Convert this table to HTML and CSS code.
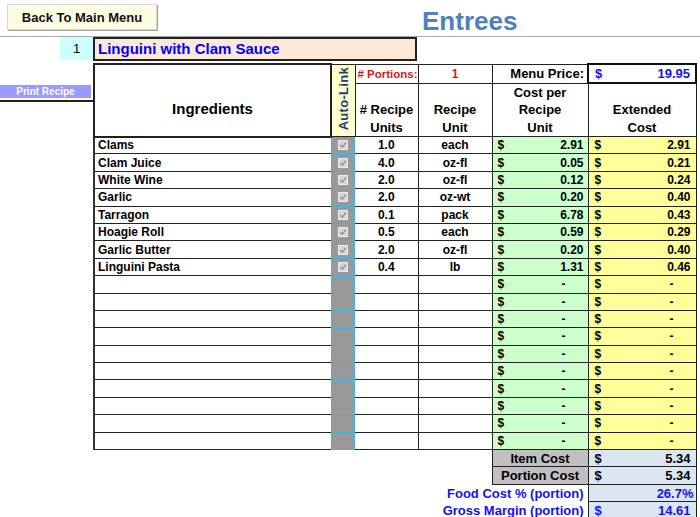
FILE: index.html
```html
<!DOCTYPE html>
<html>
<head>
<meta charset="utf-8">
<link rel="stylesheet" href="styles.css">
</head>
<body>
<div class="page">
  <header class="topbar">
    <button class="back-btn">Back To Main Menu</button>
    <h1 class="title">Entrees</h1>
  </header>
  <div class="name-row">
    <div class="recipe-no">1</div>
    <div class="recipe-name">Linguini with Clam Sauce</div>
  </div>
  <div class="sheet">
    <aside class="gutter">
      <div class="print-btn">Print Recipe</div>
      <div class="print-rule"></div>
    </aside>
    <table class="grid">
      <colgroup>
        <col class="c-ing"><col class="c-auto"><col class="c-units"><col class="c-unit"><col class="c-cost"><col class="c-ext">
      </colgroup>
      <tr class="h1">
        <th class="ing-h" rowspan="2">Ingredients</th>
        <th class="auto-h" rowspan="2"><span class="vtext">Auto-Link</span></th>
        <td class="portions-l">#&nbsp;Portions:</td>
        <td class="portions-v">1</td>
        <td class="menu-l">Menu Price:</td>
        <td class="menu-v"><span class="d">$</span>19.95</td>
      </tr>
      <tr class="h2">
        <th class="hd">#&nbsp;Recipe<br>Units</th>
        <th class="hd">Recipe<br>Unit</th>
        <th class="hd cost-h">Cost per<br>Recipe<br>Unit</th>
        <th class="hd">Extended<br>Cost</th>
      </tr>
      <tr class="r"><td class="ing">Clams</td><td class="auto"><svg class="chk" width="10" height="10" viewBox="0 0 10 10"><rect x="0.5" y="0.5" width="9" height="9" fill="#d6d6d6" stroke="#ececec"/><path d="M2.2 5.2l2 2 3.8-4.6" fill="none" stroke="#8a8a8a" stroke-width="1.2"/></svg></td><td class="units">1.0</td><td class="unit">each</td><td class="cost"><span class="d">$</span>2.91</td><td class="ext"><span class="d">$</span>2.91</td></tr>
      <tr class="r"><td class="ing">Clam Juice</td><td class="auto"><svg class="chk" width="10" height="10" viewBox="0 0 10 10"><rect x="0.5" y="0.5" width="9" height="9" fill="#d6d6d6" stroke="#ececec"/><path d="M2.2 5.2l2 2 3.8-4.6" fill="none" stroke="#8a8a8a" stroke-width="1.2"/></svg></td><td class="units">4.0</td><td class="unit">oz-fl</td><td class="cost"><span class="d">$</span>0.05</td><td class="ext"><span class="d">$</span>0.21</td></tr>
      <tr class="r"><td class="ing">White Wine</td><td class="auto"><svg class="chk" width="10" height="10" viewBox="0 0 10 10"><rect x="0.5" y="0.5" width="9" height="9" fill="#d6d6d6" stroke="#ececec"/><path d="M2.2 5.2l2 2 3.8-4.6" fill="none" stroke="#8a8a8a" stroke-width="1.2"/></svg></td><td class="units">2.0</td><td class="unit">oz-fl</td><td class="cost"><span class="d">$</span>0.12</td><td class="ext"><span class="d">$</span>0.24</td></tr>
      <tr class="r"><td class="ing">Garlic</td><td class="auto"><svg class="chk" width="10" height="10" viewBox="0 0 10 10"><rect x="0.5" y="0.5" width="9" height="9" fill="#d6d6d6" stroke="#ececec"/><path d="M2.2 5.2l2 2 3.8-4.6" fill="none" stroke="#8a8a8a" stroke-width="1.2"/></svg></td><td class="units">2.0</td><td class="unit">oz-wt</td><td class="cost"><span class="d">$</span>0.20</td><td class="ext"><span class="d">$</span>0.40</td></tr>
      <tr class="r"><td class="ing">Tarragon</td><td class="auto"><svg class="chk" width="10" height="10" viewBox="0 0 10 10"><rect x="0.5" y="0.5" width="9" height="9" fill="#d6d6d6" stroke="#ececec"/><path d="M2.2 5.2l2 2 3.8-4.6" fill="none" stroke="#8a8a8a" stroke-width="1.2"/></svg></td><td class="units">0.1</td><td class="unit">pack</td><td class="cost"><span class="d">$</span>6.78</td><td class="ext"><span class="d">$</span>0.43</td></tr>
      <tr class="r"><td class="ing">Hoagie Roll</td><td class="auto"><svg class="chk" width="10" height="10" viewBox="0 0 10 10"><rect x="0.5" y="0.5" width="9" height="9" fill="#d6d6d6" stroke="#ececec"/><path d="M2.2 5.2l2 2 3.8-4.6" fill="none" stroke="#8a8a8a" stroke-width="1.2"/></svg></td><td class="units">0.5</td><td class="unit">each</td><td class="cost"><span class="d">$</span>0.59</td><td class="ext"><span class="d">$</span>0.29</td></tr>
      <tr class="r"><td class="ing">Garlic Butter</td><td class="auto"><svg class="chk" width="10" height="10" viewBox="0 0 10 10"><rect x="0.5" y="0.5" width="9" height="9" fill="#d6d6d6" stroke="#ececec"/><path d="M2.2 5.2l2 2 3.8-4.6" fill="none" stroke="#8a8a8a" stroke-width="1.2"/></svg></td><td class="units">2.0</td><td class="unit">oz-fl</td><td class="cost"><span class="d">$</span>0.20</td><td class="ext"><span class="d">$</span>0.40</td></tr>
      <tr class="r"><td class="ing">Linguini Pasta</td><td class="auto"><svg class="chk" width="10" height="10" viewBox="0 0 10 10"><rect x="0.5" y="0.5" width="9" height="9" fill="#d6d6d6" stroke="#ececec"/><path d="M2.2 5.2l2 2 3.8-4.6" fill="none" stroke="#8a8a8a" stroke-width="1.2"/></svg></td><td class="units">0.4</td><td class="unit">lb</td><td class="cost"><span class="d">$</span>1.31</td><td class="ext"><span class="d">$</span>0.46</td></tr>
      <tr class="r"><td class="ing"></td><td class="auto"></td><td class="units"></td><td class="unit"></td><td class="cost"><span class="d">$</span><span class="dash">-</span></td><td class="ext"><span class="d">$</span><span class="dash">-</span></td></tr>
      <tr class="r"><td class="ing"></td><td class="auto"></td><td class="units"></td><td class="unit"></td><td class="cost"><span class="d">$</span><span class="dash">-</span></td><td class="ext"><span class="d">$</span><span class="dash">-</span></td></tr>
      <tr class="r"><td class="ing"></td><td class="auto"></td><td class="units"></td><td class="unit"></td><td class="cost"><span class="d">$</span><span class="dash">-</span></td><td class="ext"><span class="d">$</span><span class="dash">-</span></td></tr>
      <tr class="r"><td class="ing"></td><td class="auto"></td><td class="units"></td><td class="unit"></td><td class="cost"><span class="d">$</span><span class="dash">-</span></td><td class="ext"><span class="d">$</span><span class="dash">-</span></td></tr>
      <tr class="r"><td class="ing"></td><td class="auto"></td><td class="units"></td><td class="unit"></td><td class="cost"><span class="d">$</span><span class="dash">-</span></td><td class="ext"><span class="d">$</span><span class="dash">-</span></td></tr>
      <tr class="r"><td class="ing"></td><td class="auto"></td><td class="units"></td><td class="unit"></td><td class="cost"><span class="d">$</span><span class="dash">-</span></td><td class="ext"><span class="d">$</span><span class="dash">-</span></td></tr>
      <tr class="r"><td class="ing"></td><td class="auto"></td><td class="units"></td><td class="unit"></td><td class="cost"><span class="d">$</span><span class="dash">-</span></td><td class="ext"><span class="d">$</span><span class="dash">-</span></td></tr>
      <tr class="r"><td class="ing"></td><td class="auto"></td><td class="units"></td><td class="unit"></td><td class="cost"><span class="d">$</span><span class="dash">-</span></td><td class="ext"><span class="d">$</span><span class="dash">-</span></td></tr>
      <tr class="r"><td class="ing"></td><td class="auto"></td><td class="units"></td><td class="unit"></td><td class="cost"><span class="d">$</span><span class="dash">-</span></td><td class="ext"><span class="d">$</span><span class="dash">-</span></td></tr>
      <tr class="r last"><td class="ing"></td><td class="auto"></td><td class="units"></td><td class="unit"></td><td class="cost"><span class="d">$</span><span class="dash">-</span></td><td class="ext"><span class="d">$</span><span class="dash">-</span></td></tr>
      <tr class="s"><td class="blank" colspan="4"></td><td class="sum-l">Item Cost</td><td class="sum-v"><span class="d">$</span>5.34</td></tr>
      <tr class="s"><td class="blank" colspan="4"></td><td class="sum-l">Portion Cost</td><td class="sum-v"><span class="d">$</span>5.34</td></tr>
      <tr class="s"><td class="blank fc-l" colspan="5">Food Cost % (portion)</td><td class="sum-v blue pct">26.7%</td></tr>
      <tr class="s"><td class="blank fc-l" colspan="5">Gross Margin (portion)</td><td class="sum-v blue"><span class="d">$</span>14.61</td></tr>
    </table>
  </div>
</div>
</body>
</html>
```
FILE: styles.css
```css
* { box-sizing: border-box; }
body {
  margin: 0;
  font-family: "Liberation Sans", Arial, sans-serif;
  background: #fff;
  color: #000;
}
.page {
  width: 700px;
  height: 517px;
  overflow: hidden;
}
.topbar {
  display: flex;
  align-items: flex-start;
  height: 37px;
  border-bottom: 1px solid #a8a8a8;
}
.back-btn {
  margin: 4px 0 0 7px;
  width: 150px;
  height: 26px;
  padding: 0;
  background: #fdfde4;
  border: 1px solid #d6d6d6;
  box-shadow: 1px 1px 0 #a0a0a0;
  font: bold 13px "Liberation Sans", Arial, sans-serif;
  color: #111;
}
.title {
  margin: 6px 0 0 265px;
  font-size: 26px;
  line-height: 30px;
  font-weight: bold;
  color: #4f81bd;
}
.name-row {
  display: flex;
  height: 24px;
}
.recipe-no {
  margin-left: 60px;
  width: 33px;
  height: 23px;
  background: #ccffff;
  font-size: 13px;
  display: flex;
  align-items: center;
  justify-content: center;
}
.recipe-name {
  width: 324px;
  height: 24px;
  border: 2px solid #222;
  background: #fde9d9;
  color: #0000ff;
  font-weight: bold;
  font-size: 15px;
  line-height: 20px;
  padding-left: 3px;
}
.sheet {
  display: flex;
  margin-top: 2px;
}
.gutter {
  width: 93px;
  flex: none;
}
.print-btn {
  margin-top: 22px;
  width: 91px;
  height: 13px;
  background: #9999ff;
  color: #fff;
  font-size: 10px;
  font-weight: bold;
  line-height: 13px;
  text-align: center;
}
.print-rule {
  margin-top: 2px;
  width: 93px;
  height: 2px;
  background: #222;
}
.grid {
  border-collapse: collapse;
  table-layout: fixed;
  width: 602px;
  font-size: 12px;
  font-weight: bold;
}
.c-ing { width: 237px; }
.c-auto { width: 24px; }
.c-units { width: 63px; }
.c-unit { width: 74px; }
.c-cost { width: 96px; }
.c-ext { width: 108px; }
.grid td, .grid th {
  padding: 0;
  border: 1px solid #222;
  white-space: nowrap;
  overflow: hidden;
}
.h1 { height: 19px; }
.h2 { height: 53px; }
.ing-h {
  font-size: 15px;
  border: 2px solid #222 !important;
  vertical-align: middle;
  padding-top: 17px !important;
}
.auto-h {
  background: #ffffcc;
  vertical-align: middle;
  text-align: center;
}
.vtext {
  display: inline-block;
  writing-mode: vertical-rl;
  transform: rotate(180deg);
  font-size: 13px;
  color: #1f3f73;
  letter-spacing: 0.3px;
}
.portions-l {
  color: #e3161b;
  font-size: 11.5px;
  text-align: left;
  padding-left: 2px !important;
}
.portions-v {
  color: #e3161b;
  text-align: center;
}
.menu-l {
  font-size: 13px;
  text-align: right;
  padding-right: 3px !important;
}
.menu-v {
  border: 2px solid #111 !important;
  color: #1010ff;
  font-size: 13px;
  text-align: right;
  padding: 0 5px 0 6px !important;
}
.hd {
  font-size: 13px;
  line-height: 17.5px;
  vertical-align: bottom;
  text-align: center;
}
.r { height: 17.4px; }
.s { height: 17.4px; }
.ing {
  border-left: 2px solid #333 !important;
  border-right: none !important;
  padding-left: 3px !important;
}
.auto {
  background: #999;
  border: none !important;
  box-shadow: inset 1px 1px 0 #3db4e6, inset -1px 0 0 #3db4e6;
  text-align: center;
  vertical-align: middle;
  line-height: 0;
}
.last .auto {
  box-shadow: inset 1px 1px 0 #3db4e6, inset -1px -1px 0 #3db4e6;
}
.chk { display: inline-block; }
.units {
  text-align: center;
  border-left: none !important;
}
.unit { text-align: center; }
.cost {
  background: #ccffcc;
  text-align: right;
  padding: 0 4px 0 5px !important;
}
.ext {
  background: #ffff99;
  text-align: right;
  padding: 0 5px 0 6px !important;
}
.d { float: left; }
.ext .dash { padding-right: 17px; }
.cost .dash { padding-right: 18px; }
.blank { border: none !important; }
.sum-l {
  background: #c0c0c0;
  text-align: center;
  font-size: 13px;
}
.sum-v {
  background: #dce6f1;
  text-align: right;
  font-size: 13px;
  padding: 0 5px 0 6px !important;
}
.pct { padding-right: 2px !important; }
.fc-l {
  text-align: right;
  color: #1010ff;
  font-size: 13px;
  padding-right: 4px !important;
}
.blue { color: #1010ff; }
```
